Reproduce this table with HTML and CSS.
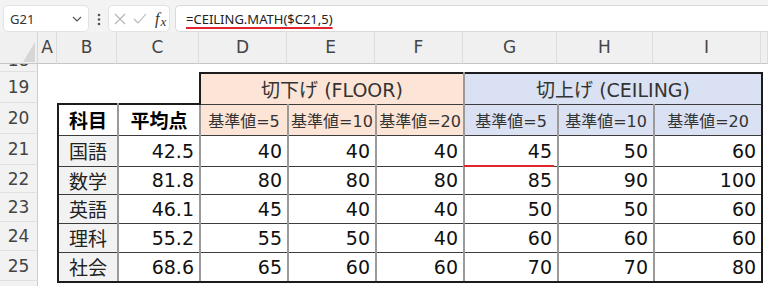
FILE: index.html
```html
<!DOCTYPE html>
<html lang="ja">
<head>
<meta charset="utf-8">
<title>CEILING.MATH</title>
<link rel="stylesheet" href="styles.css">
</head>
<body>
<div class="fbar">
  <div class="namebox">
    <span class="ref">G21</span>
    <svg class="chev" width="10" height="6" viewBox="0 0 10 6"><polyline points="1,1 5,5 9,1" fill="none" stroke="#555" stroke-width="1.2"/></svg>
  </div>
  <div class="dots">
    <svg width="4" height="13" viewBox="0 0 4 13"><circle cx="2" cy="2" r="1.3" fill="#555"/><circle cx="2" cy="6.5" r="1.3" fill="#555"/><circle cx="2" cy="11" r="1.3" fill="#555"/></svg>
  </div>
  <div class="fxbox">
    <svg width="12" height="12" viewBox="0 0 12 12"><path d="M1 1 L11 11 M11 1 L1 11" stroke="#b4b4b4" stroke-width="1.1" fill="none"/></svg>
    <svg width="14" height="11" viewBox="0 0 14 11"><polyline points="1,6 5,10 13,1" stroke="#b4b4b4" stroke-width="1.1" fill="none"/></svg>
    <span class="fx"><i>f</i><i class="x">x</i></span>
  </div>
  <div class="finput"><span class="formula">=CEILING.MATH($C21,5)</span></div>
</div>

<div class="sheet">
  <div class="corner"><svg width="38" height="32" viewBox="0 0 38 32"><polygon points="35,10 35,30 23,30" fill="#d6d6d6"/></svg></div>
  <div class="ch">A</div>
  <div class="ch">B</div>
  <div class="ch">C</div>
  <div class="ch">D</div>
  <div class="ch">E</div>
  <div class="ch">F</div>
  <div class="ch">G</div>
  <div class="ch">H</div>
  <div class="ch">I</div>
  <div class="ch fill"></div>

  <div class="rh partial"><span>18</span></div>
  <div class="rh">19</div>
  <div class="rh">20</div>
  <div class="rh">21</div>
  <div class="rh">22</div>
  <div class="rh">23</div>
  <div class="rh">24</div>
  <div class="rh">25</div>
  <div class="rh rest"></div>

  <table class="data">
    <colgroup>
      <col class="cb"><col class="cc"><col class="cd"><col class="ce"><col class="cf"><col class="cg"><col class="chh"><col class="ci">
    </colgroup>
    <tr class="r19">
      <td class="blank"></td><td class="blank"></td>
      <td class="h1 floor" colspan="3">切下げ (FLOOR)</td>
      <td class="h1 ceil" colspan="3">切上げ (CEILING)</td>
    </tr>
    <tr class="r20">
      <td class="hd first">科目</td><td class="hd">平均点</td>
      <td class="h2 floor">基準値=5</td><td class="h2 floor">基準値=10</td><td class="h2 floor">基準値=20</td>
      <td class="h2 ceil">基準値=5</td><td class="h2 ceil">基準値=10</td><td class="h2 ceil">基準値=20</td>
    </tr>
    <tr class="r21">
      <td class="subj first">国語</td><td class="num">42.5</td><td class="num">40</td><td class="num">40</td><td class="num">40</td><td class="num mark">45</td><td class="num">50</td><td class="num">60</td>
    </tr>
    <tr class="r22">
      <td class="subj first">数学</td><td class="num">81.8</td><td class="num">80</td><td class="num">80</td><td class="num">80</td><td class="num">85</td><td class="num">90</td><td class="num">100</td>
    </tr>
    <tr class="r23">
      <td class="subj first">英語</td><td class="num">46.1</td><td class="num">45</td><td class="num">40</td><td class="num">40</td><td class="num">50</td><td class="num">50</td><td class="num">60</td>
    </tr>
    <tr class="r24">
      <td class="subj first">理科</td><td class="num">55.2</td><td class="num">55</td><td class="num">50</td><td class="num">40</td><td class="num">60</td><td class="num">60</td><td class="num">60</td>
    </tr>
    <tr class="r25">
      <td class="subj first">社会</td><td class="num">68.6</td><td class="num">65</td><td class="num">60</td><td class="num">60</td><td class="num">70</td><td class="num">70</td><td class="num">80</td>
    </tr>
  </table>
</div>
</body>
</html>
```

FILE: styles.css
```css
* { box-sizing: border-box; }

html, body {
  margin: 0;
  padding: 0;
}

body {
  width: 768px;
  height: 286px;
  overflow: hidden;
  background: #ffffff;
  font-family: "DejaVu Sans", "Noto Sans CJK JP", sans-serif;
  color: #111;
}

/* ---------- formula bar ---------- */
.fbar {
  height: 32px;
  background: #f3f3f3;
  display: flex;
  align-items: flex-start;
  padding-top: 5px;
}

.namebox {
  margin-left: 3px;
  width: 86px;
  height: 27px;
  background: #fff;
  border: 1px solid #e2e2e2;
  border-radius: 5px;
  display: flex;
  align-items: center;
  justify-content: space-between;
  padding: 0 6px 0 6px;
  font: 13px "Noto Sans", sans-serif;
  color: #333;
}

.chev { margin-top: 1px; }

.dots {
  width: 19px;
  display: flex;
  justify-content: center;
  padding-top: 8px;
}

.fxbox {
  width: 62px;
  height: 27px;
  background: #fff;
  border: 1px solid #e2e2e2;
  border-radius: 5px;
  display: flex;
  align-items: center;
  gap: 7px;
  padding-left: 5px;
}

.fx {
  font-family: "Liberation Serif", "DejaVu Serif", serif;
  font-size: 16px;
  color: #333;
  margin-left: 1px;
}

.fx .x {
  font-size: 13px;
  position: relative;
  top: 2px;
  margin-left: 1px;
}

.finput {
  margin-left: 5px;
  flex: 1;
  height: 27px;
  background: #fff;
  border: 1px solid #dadada;
  border-right: none;
  border-radius: 5px 0 0 5px;
  padding-left: 10px;
  display: flex;
  align-items: center;
}

.formula {
  font: 13px "Noto Sans", sans-serif;
  color: #222;
  text-decoration: underline;
  text-decoration-color: #e0262b;
  text-decoration-thickness: 2px;
  text-underline-offset: 3px;
}

/* ---------- sheet grid ---------- */
.sheet {
  height: 254px;
  display: grid;
  grid-template-columns: 38px 19px 60px 82px 88px 88px 88px 94px 96px 108px 1fr;
  grid-template-rows: 32px 8px 31px 31px 31px 28px 29px 29px 30px 1fr;
}

.corner {
  background: #f0f0f0;
  border-right: 1px solid #d6d6d6;
  border-bottom: 1px solid #c6c6c6;
}

.corner svg { display: block; }

.ch {
  background: #f0f0f0;
  border-right: 1px solid #dcdcdc;
  border-bottom: 1px solid #c6c6c6;
  display: flex;
  align-items: center;
  justify-content: center;
  font-size: 17px;
  color: #444;
  padding-bottom: 1px;
}

.rh {
  grid-column: 1;
  background: #f2f2f2;
  border-right: 1px solid #cdcdcd;
  border-bottom: 1px solid #e0e0e0;
  display: flex;
  align-items: center;
  justify-content: center;
  font-size: 17px;
  color: #444;
}

.rh.partial {
  overflow: hidden;
  align-items: flex-end;
  line-height: 22px;
}

.rh.rest { border-bottom: none; }

/* ---------- data table ---------- */
.data {
  grid-column: 3 / 11;
  grid-row: 3 / 10;
  width: 100%;
  height: 100%;
  border-collapse: collapse;
  table-layout: fixed;
}

.cb { width: 60px; }
.cc { width: 82px; }
.cd, .ce, .cf { width: 88px; }
.cg { width: 94px; }
.chh { width: 96px; }
.ci { width: 108px; }

.r19 { height: 31px; }
.r20 { height: 31px; }
.r21 { height: 31px; }
.r22 { height: 28px; }
.r23 { height: 29px; }
.r24 { height: 29px; }
.r25 { height: 30px; }

.data td {
  border-right: 2px solid #9a9a9a;
  border-bottom: 1px solid #3c3c3c;
  padding: 0 5px;
  font-size: 19px;
  white-space: nowrap;
  overflow: hidden;
}

.data tr td:last-child { border-right: 2px solid #1c1c1c; }
.data tr.r25 td { border-bottom: 2px solid #1c1c1c; }
.data td.first { border-left: 2px solid #1c1c1c; }

.data td.blank {
  border: none;
  background: #fff;
}

.data td.h1 {
  border-top: 2px solid #1c1c1c;
  text-align: center;
  color: #333;
  font-size: 19px;
  padding-bottom: 1px;
}

.data td.h1.floor { border-left: 2px solid #1c1c1c; }

.data td.hd {
  border-top: 2px solid #1c1c1c;
  text-align: center;
  font-weight: bold;
  color: #000;
}

.data td.h2 {
  text-align: center;
  font-size: 16px;
  color: #333;
  padding: 0 1px;
}

.floor { background: #fce4d6; }
.ceil { background: #d9e1f2; }

.data td.subj {
  background: #f2f2f2;
  text-align: center;
  color: #222;
}

.data td.num {
  text-align: right;
  color: #111;
}

.data td.mark {
  position: relative;
  overflow: visible;
}

.data td.mark::after {
  content: "";
  position: absolute;
  left: -1px;
  right: 3px;
  bottom: -1px;
  height: 2px;
  background: #e0262b;
}
```
